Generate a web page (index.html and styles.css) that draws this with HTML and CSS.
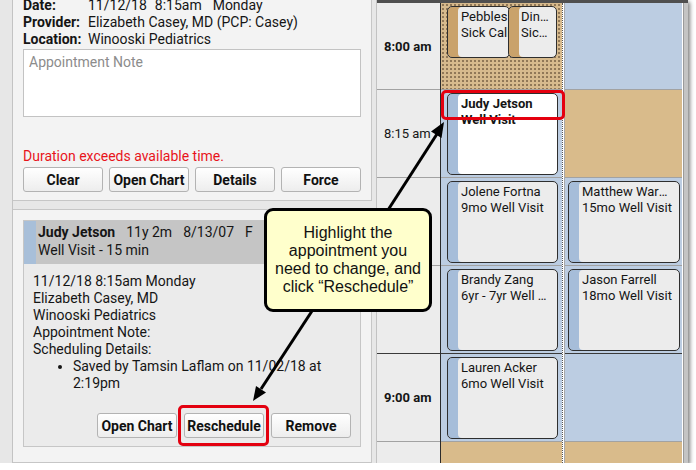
FILE: index.html
```html
<!DOCTYPE html>
<html>
<head>
<meta charset="utf-8">
<title>Reschedule</title>
<link rel="stylesheet" href="styles.css">
</head>
<body>
<div class="screen">
  <div class="left">
    <div class="stack">
      <section class="panel booking">
        <div class="field"><span class="lbl">Date:</span><span class="val">11/12/18<span class="gap1">8:15am</span><span class="gap2">Monday</span></span></div>
        <div class="field"><span class="lbl">Provider:</span><span class="val">Elizabeth Casey, MD (PCP: Casey)</span></div>
        <div class="field"><span class="lbl">Location:</span><span class="val">Winooski Pediatrics</span></div>
        <div class="note">Appointment Note</div>
        <div class="error">Duration exceeds available time.</div>
        <div class="btn-row">
          <button class="btn">Clear</button>
          <button class="btn">Open Chart</button>
          <button class="btn">Details</button>
          <button class="btn">Force</button>
        </div>
      </section>
      <section class="panel detail">
        <div class="appt">
          <div class="appt-head">
            <div class="line1"><b>Judy Jetson</b><span>11y 2m</span><span>8/13/07</span><span>F</span></div>
            <div>Well Visit - 15 min</div>
          </div>
          <div class="appt-body">
            <div>11/12/18 8:15am Monday</div>
            <div>Elizabeth Casey, MD</div>
            <div>Winooski Pediatrics</div>
            <div>Appointment Note:</div>
            <div>Scheduling Details:</div>
            <ul class="log"><li>Saved by Tamsin Laflam on 11/02/18 at 2:19pm</li></ul>
          </div>
          <div class="appt-actions">
            <button class="btn">Open Chart</button>
            <button class="btn highlighted">Reschedule</button>
            <button class="btn">Remove</button>
          </div>
        </div>
      </section>
    </div>
  </div>

  <div class="calendar">
    <div class="times">
      <div class="row first trow hour">8:00 am</div>
      <div class="row trow">8:15 am</div>
      <div class="row trow"></div>
      <div class="row trow hour-end"></div>
      <div class="row trow hour">9:00 am</div>
      <div class="row last"></div>
    </div>

    <div class="day day1">
      <div class="row first dots pair">
        <div class="card tan-stripe pebbles"><div>Pebbles</div><div>Sick Call</div></div>
        <div class="card tan-stripe din"><div>Dino Flintstone</div><div>Sick Call</div></div>
      </div>
      <div class="row blue slot selected-row">
        <div class="card white"><div>Judy Jetson</div><div>Well Visit</div></div>
        <div class="sel"></div>
      </div>
      <div class="row blue slot">
        <div class="card"><div>Jolene Fortna</div><div>9mo Well Visit</div></div>
      </div>
      <div class="row blue slot hour-end">
        <div class="card"><div>Brandy Zang</div><div>6yr - 7yr Well Visit</div></div>
      </div>
      <div class="row blue slot">
        <div class="card"><div>Lauren Acker</div><div>6mo Well Visit</div></div>
      </div>
      <div class="row last tan"></div>
    </div>

    <div class="sep"></div>

    <div class="day day2">
      <div class="row first blue"></div>
      <div class="row tan"></div>
      <div class="row blue slot">
        <div class="card"><div class="nm">Matthew Warren</div><div>15mo Well Visit</div></div>
      </div>
      <div class="row blue slot hour-end">
        <div class="card"><div class="nm">Jason Farrell</div><div>18mo Well Visit</div></div>
      </div>
      <div class="row blue"></div>
      <div class="row last tan"></div>
    </div>

    <div class="edge"></div>
  </div>

  <div class="callout">Highlight the<br>appointment you<br>need to change, and<br>click “Reschedule”</div>

  <svg class="arrows" width="688" height="463" viewBox="0 0 688 463">
    <line x1="388" y1="210" x2="437" y2="134" stroke="#000" stroke-width="3"/>
    <polygon points="444,122 441.5,138 431,131.5" fill="#000"/>
    <line x1="312" y1="311" x2="261" y2="389" stroke="#000" stroke-width="3"/>
    <polygon points="253,401 256,386 266,392.5" fill="#000"/>
  </svg>
</div>
</body>
</html>
```

FILE: styles.css
```css
* { box-sizing: border-box; }

body {
  margin: 0;
  background: #ffffff;
  font-family: Roboto, "Liberation Sans", sans-serif;
  color: #151515;
}

.screen {
  position: relative;
  display: flex;
  width: 688px;
  height: 463px;
  overflow: hidden;
  box-shadow: 2px 2px 4px rgba(0, 0, 0, 0.5);
}

/* ---------- left pane ---------- */
.left {
  width: 377px;
  flex-shrink: 0;
  padding: 0 4px 0 12px;
  background: #e7e7e7;
  border-right: 1px solid #c2c2c2;
}

.stack {
  height: 100%;
  display: flex;
  flex-direction: column;
  border-left: 1px solid #c3c3c3;
}

.panel {
  background: #f3f3f3;
  border: 1px solid #c6c6c6;
  border-left: 0;
}

.booking {
  margin-top: -4px;
  padding: 0 10px 8px 10px;
}

.field {
  display: flex;
  font-size: 14px;
  line-height: 17px;
}

.lbl {
  width: 65px;
  font-weight: bold;
  flex-shrink: 0;
}

.gap1 { margin-left: 8px; }
.gap2 { margin-left: 11px; }

.note {
  margin-top: 1px;
  height: 68px;
  border: 1px solid #c3c3c3;
  background: #ffffff;
  padding: 4px 5px;
  color: #8c8c8c;
  font-size: 14px;
  line-height: 17px;
}

.error {
  margin-top: 31px;
  color: #e8131b;
  font-size: 14px;
  line-height: 17px;
}

.btn-row {
  margin-top: 2px;
  display: flex;
  gap: 6px;
}

.btn-row .btn { flex: 1; }

.btn {
  height: 25px;
  padding: 0;
  border: 1px solid #b3b3b3;
  border-radius: 3px;
  background: linear-gradient(#ffffff, #ededed);
  font-family: Roboto, "Liberation Sans", sans-serif;
  font-size: 14px;
  font-weight: bold;
  color: #111111;
}

.detail {
  margin-top: 8px;
  flex: 1;
  padding: 10px;
}

.appt {
  border: 1px solid #c6c6c6;
  background: #ebebeb;
}

.appt-head {
  background: #c5c5c5;
  box-shadow: inset 12px 0 0 #a8bfd9;
  padding: 2px 0 5px 14px;
  font-size: 14px;
  line-height: 18px;
}

.line1 span { margin-left: 11px; }

.appt-body {
  padding: 9px 9px 0 9px;
  font-size: 14px;
  line-height: 17px;
}

.log {
  margin: 0;
  padding-left: 40px;
}

.appt-actions {
  display: flex;
  justify-content: flex-end;
  gap: 7px;
  padding: 21px 9px 8px 9px;
}

.appt-actions .btn { width: 80px; }

.highlighted { position: relative; }

.highlighted::after {
  content: "";
  position: absolute;
  left: -7px;
  right: -6px;
  top: -9px;
  bottom: -9px;
  border: 3px solid #e3000f;
  border-radius: 5px;
}

/* ---------- calendar ---------- */
.calendar {
  flex: 1;
  display: flex;
  border-top: 3px solid #4f4f4f;
}

.times, .day {
  display: flex;
  flex-direction: column;
  flex-shrink: 0;
}

.times {
  width: 64px;
  background: #ececec;
  border-right: 1px solid #2b2b2b;
}

.row {
  height: 88px;
  flex-shrink: 0;
  border-bottom: 1px solid #a2a2a2;
}

.row.first { height: 87px; }
.row.hour-end { border-bottom-color: #3a3a3a; }
.row.last { flex: 1; border-bottom: 0; }

.trow {
  display: flex;
  align-items: center;
  padding-left: 7px;
  font-size: 13px;
}

.trow.hour { font-weight: bold; }

.day1 {
  width: 122px;
  border-right: 1px dotted #555555;
}

.day2 { width: 117px; }

.sep {
  width: 2px;
  flex-shrink: 0;
  background: #ffffff;
  border-right: 1px solid #a8a8a8;
}

.edge {
  width: 6px;
  flex-shrink: 0;
  background: linear-gradient(to right, #ffffff 0 1px, #9a9a9a 1px 2px, #c4c4c4 2px);
}

.blue { background: #bccde2; }
.tan { background: #d9bb8b; }

.dots {
  background-color: #d7ba8d;
  background-image: radial-gradient(circle at center, #8f7656 0.7px, transparent 1.1px);
  background-size: 4px 4px;
}

.slot {
  display: flex;
  flex-direction: column;
}

.day1 .slot { padding: 3px 4px 2px 6px; }
.day2 .slot { padding: 3px 2px 2px 3px; }

.pair {
  display: flex;
  align-items: flex-start;
  padding: 3px 0 0 6px;
}

.card {
  flex: 1;
  min-width: 0;
  border: 1px solid #2e2e2e;
  border-radius: 5px;
  background: #ececec;
  box-shadow: inset 10px 0 0 #a6bdd9;
  padding: 2px 4px 0 13px;
  font-size: 13px;
  line-height: 16px;
  overflow: hidden;
}

.card div {
  white-space: nowrap;
  overflow: hidden;
  text-overflow: ellipsis;
}

.card .nm { margin-right: 6px; }

.card.tan-stripe { box-shadow: inset 10px 0 0 #c9a26b; }

.card.white {
  background: #ffffff;
  font-weight: bold;
}

.pebbles {
  flex: none;
  width: 63px;
  height: 52px;
  padding-right: 0;
}

.pebbles div { text-overflow: clip; }

.din {
  flex: none;
  width: 49px;
  height: 52px;
  margin-left: -2px;
  padding: 2px 3px 0 12px;
  position: relative;
  z-index: 1;
}

.selected-row { position: relative; }

.sel {
  position: absolute;
  left: 0;
  top: 0;
  width: 124px;
  height: 30px;
  border: 3px solid #e5000f;
  border-radius: 5px;
  z-index: 3;
}

/* ---------- annotation ---------- */
.callout {
  position: absolute;
  left: 264px;
  top: 208px;
  width: 168px;
  height: 104px;
  display: flex;
  align-items: center;
  justify-content: center;
  text-align: center;
  border: 3px solid #000000;
  border-radius: 9px;
  background: #ffffcc;
  font-family: "Liberation Sans", Arial, sans-serif;
  font-size: 16px;
  line-height: 18px;
  color: #111111;
  z-index: 5;
}

.arrows {
  position: absolute;
  left: 0;
  top: 0;
  z-index: 6;
  pointer-events: none;
}
```
